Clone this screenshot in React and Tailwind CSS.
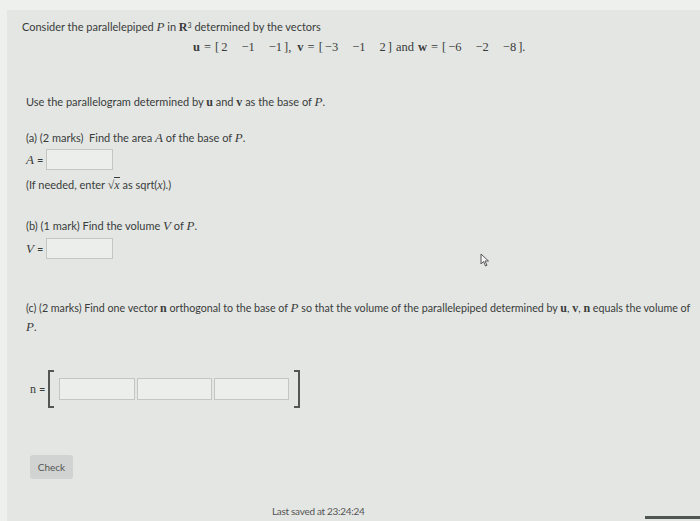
import React from "react";

const serif = { fontFamily: '"Liberation Serif", "DejaVu Serif", serif' };

function MathI({ children }) {
    return <span className="italic text-[13px] leading-[14px]" style={serif}>{children}</span>;
}

function MathB({ children }) {
    return <span className="font-bold text-[12px] leading-[14px]" style={serif}>{children}</span>;
}

function Box({ className = "" }) {
    return <div className={"border border-[#c4c6c3] bg-[#eceeeb] " + className}></div>;
}

// one bracketed row vector, entries spaced out
function Vec({ items }) {
    return (
        <span className="inline-flex items-center">
            <span className="mr-[2px]">[</span>
            {items.map((it, i) => (
                <span key={i} className={i > 0 ? "ml-[14px]" : ""}>{it}</span>
            ))}
            <span className="ml-[2px]">]</span>
        </span>
    );
}

export default function App() {
    return (
        <div className="w-[700px] h-[521px] overflow-hidden bg-[#eef0ee] pt-[10px] pl-[7px] text-[#3a3c3b]" style={{ fontFamily: 'Lato, "Open Sans", sans-serif' }}>
            <div className="relative h-[511px] bg-[#e3e6e3] pl-[15px] pt-[10px] text-[11px] leading-[14px]">
                <p>
                    Consider the parallelepiped <MathI>P</MathI> in <MathB>R</MathB><sup className="text-[7px]">3</sup> determined by the vectors
                </p>
                <p className="mt-[6px] ml-[171px] text-[12.5px] flex items-center gap-[4px]" style={serif}>
                    <b>u</b><span>=</span><Vec items={["2", "−1", "−1"]} /><span className="-ml-[4px]">,</span>
                    <b className="ml-[2px]">v</b><span>=</span><Vec items={["−3", "−1", "2"]} />
                    <span>and</span>
                    <b>w</b><span>=</span><Vec items={["−6", "−2", "−8"]} /><span className="-ml-[4px]">.</span>
                </p>

                <p className="mt-[41px] ml-[4px]">
                    Use the parallelogram determined by <MathB>u</MathB> and <MathB>v</MathB> as the base of <MathI>P</MathI>.
                </p>

                <p className="mt-[22px] ml-[4px]">
                    (a) (2 marks) &nbsp;Find the area <MathI>A</MathI> of the base of <MathI>P</MathI>.
                </p>
                <div className="mt-[4px] ml-[4px] flex items-center gap-[3px]">
                    <span className="italic text-[13px]" style={serif}>A</span>
                    <span className="text-[11px]">=</span>
                    <Box className="w-[67px] h-[21px]" />
                </div>
                <p className="mt-[8px] ml-[4px] text-[11px]">
                    (If needed, enter <span className="text-[12px] leading-[14px]" style={serif}>√<span className="italic border-t border-[#3a3c3b]">x</span></span> as sqrt(<span className="italic text-[12px] leading-[14px]" style={serif}>x</span>).)
                </p>

                <p className="mt-[27px] ml-[4px] text-[11px]">
                    (b) (1 mark) Find the volume <MathI>V</MathI> of <MathI>P</MathI>.
                </p>
                <div className="mt-[5px] ml-[4px] flex items-center gap-[3px]">
                    <span className="italic text-[13px]" style={serif}>V</span>
                    <span className="text-[11px]">=</span>
                    <Box className="w-[67px] h-[21px]" />
                </div>

                <p className="mt-[39px] ml-[4px] text-[10.7px] leading-[19px] whitespace-nowrap">
                    (c) (2 marks) Find one vector <MathB>n</MathB> orthogonal to the base of <MathI>P</MathI> so that the volume of the parallelepiped determined by <MathB>u</MathB>, <MathB>v</MathB>, <MathB>n</MathB> equals the volume of
                    <br />
                    <MathI>P</MathI>.
                </p>

                <div className="mt-[34px] ml-[8px] flex items-center">
                    <span className="text-[12px]" style={serif}>n</span>
                    <span className="ml-[3px] text-[11px]">=</span>
                    <div className="ml-[3px] w-[6px] h-[38px] border-l-2 border-t-2 border-b-2 border-[#555]"></div>
                    <div className="ml-[5px] flex gap-[2px]">
                        <Box className="w-[76px] h-[22px]" />
                        <Box className="w-[75px] h-[22px]" />
                        <Box className="w-[75px] h-[22px]" />
                    </div>
                    <div className="ml-[5px] w-[6px] h-[38px] border-r-2 border-t-2 border-b-2 border-[#555]"></div>
                </div>

                <button className="mt-[47px] ml-[8px] w-[43px] h-[24px] rounded-[3px] bg-[#d0d3d1] text-[10px] text-[#555]">
                    Check
                </button>

                <p className="absolute left-[265px] bottom-[3px] text-[10px] text-[#555] tracking-[-0.3px]">
                    Last saved at 23:24:24
                </p>

                <svg className="absolute left-[473px] top-[243px]" width="10" height="14" viewBox="0 0 10 14">
                    <path d="M1 1 L1 11 L3.5 8.5 L5.5 13 L7 12.3 L5 8 L8.5 8 Z" fill="#f4f4f4" stroke="#555" strokeWidth="1" />
                </svg>

                <div className="absolute right-0 bottom-[2px] w-[55px] h-[3px] bg-[#4e5651]"></div>
            </div>
        </div>
    );
}
